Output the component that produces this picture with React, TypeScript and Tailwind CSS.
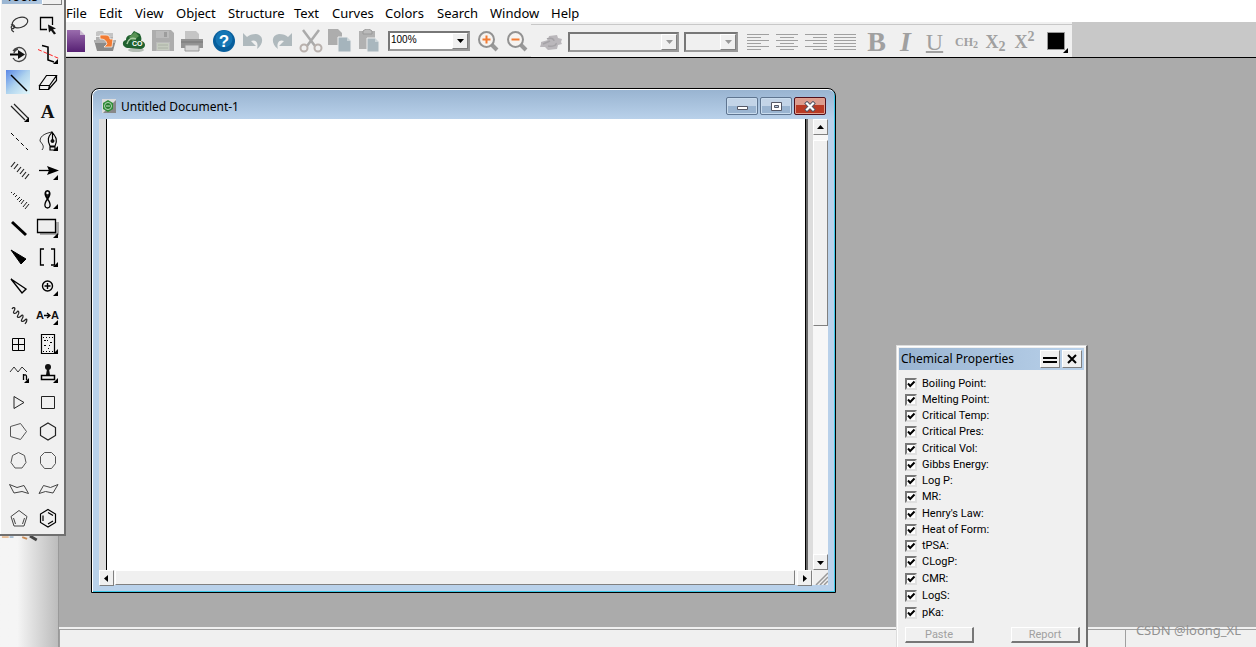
import { useState } from "react";
import type { ReactNode } from "react";
import clsx from "clsx";

const menus = [
  { label: "File", width: "w-[33px]" },
  { label: "Edit", width: "w-9" },
  { label: "View", width: "w-[41px]" },
  { label: "Object", width: "w-[52px]" },
  { label: "Structure", width: "w-[66px]" },
  { label: "Text", width: "w-[38px]" },
  { label: "Curves", width: "w-[53px]" },
  { label: "Colors", width: "w-[52px]" },
  { label: "Search", width: "w-[53px]" },
  { label: "Window", width: "w-[61px]" },
  { label: "Help", width: "w-10" },
];

const propertyGroups = [
  ["Boiling Point:", "Melting Point:", "Critical Temp:", "Critical Pres:"],
  ["Critical Vol:", "Gibbs Energy:", "Log P:", "MR:"],
  ["Henry's Law:", "Heat of Form:", "tPSA:", "CLogP:"],
  ["CMR:"],
  ["LogS:"],
  ["pKa:"],
];

const raised =
  "border border-t-white border-l-white border-r-[#808080] border-b-[#808080] bg-[#f0f0f0]";

const more = <path d="M24 19v5h-5z" fill="#000" stroke="none" />;

type Tool = { name: string; icon: ReactNode };

const tools: Tool[] = [
  {
    name: "Lasso",
    icon: (
      <g strokeWidth="1.2" stroke="#333">
        <ellipse cx="15" cy="11.5" rx="8" ry="5" transform="rotate(-18 15 11.5)" />
        <path d="M6 14c2-1 5 1 3 3s-4-1-2-2M7 17c-1 2 0 3 2 4" />
      </g>
    ),
  },
  {
    name: "Marquee",
    icon: (
      <g>
        <path d="M13 18.500H6.500V6.500H18.500V14" strokeWidth="1.300" />
        <path d="M14 13.500l8 4-3 1 3 4-2 1-3-4-2 2z" fill="#111" stroke="none" />
      </g>
    ),
  },
  {
    name: "Structure Perspective",
    icon: (
      <g strokeWidth="1.3">
        <path d="M8 11a7 7 0 1 1 0 7M9 13a5 5 0 0 1 4-4" stroke="#444" />
        <path d="M5 14.500h10" strokeWidth="2" />
        <path d="M13 10l7 4.500-7 4.500z" fill="#111" stroke="none" />
      </g>
    ),
  },
  {
    name: "Mass Fragmentation",
    icon: (
      <g>
        <path d="M8 5.500l6 1.500v13l6 2" strokeWidth="1.600" />
        <path d="M4 9.500l21 9" stroke="#f22" strokeDasharray="4 2" />
        {more}
      </g>
    ),
  },
  { name: "Solid Bond", icon: <path d="M6 6l16 16" strokeWidth="1.500" /> },
  {
    name: "Eraser",
    icon: (
      <path d="M5.500 16.500l7-10h10l-7 10zM5.500 16.500v4h9l1-4M14.500 20.500l8-9v-5" strokeWidth="1.200" />
    ),
  },
  {
    name: "Multiple Bonds",
    icon: (
      <g strokeWidth="1.200" stroke="#222">
        <path d="M6 8l14 14M9 6l14 14" />
        {more}
      </g>
    ),
  },
  {
    name: "Text",
    icon: (
      <text x="13.500" y="20" textAnchor="middle" className="font-['Liberation_Serif'] text-[19px] font-bold" fill="#111" stroke="none">
        A
      </text>
    ),
  },
  { name: "Dashed Bond", icon: <path d="M6 6l17 17" strokeDasharray="4 3" /> },
  {
    name: "Pen",
    icon: (
      <g>
        <path d="M8 23c3-4 0-6-2-9 0-6 7-8 12-9" stroke="#333" />
        <path d="M18 5c-4 5-5 8-2 14h5c3-6 1-9-3-14zM18.500 6v8M16 20h5v3h-5z" strokeWidth="1.200" />
        <circle cx="18.500" cy="14" r="1.500" fill="#111" />
        {more}
      </g>
    ),
  },
  {
    name: "Hashed Bond",
    icon: (
      <path d="M6 11l4-5M9 13l4-5M12 16l4-5M15 18l4-5M17 21l4-5M20 23l4-5" strokeWidth="1.200" stroke="#222" />
    ),
  },
  {
    name: "Arrow",
    icon: (
      <g>
        <path d="M5 14.500h11" strokeWidth="1.300" />
        <path d="M13 10l12 4.500-12 4.500 2-4.500z" fill="#000" stroke="none" />
        {more}
      </g>
    ),
  },
  {
    name: "Hashed Wedged Bond",
    icon: (
      <path d="M6 8l1-1M8 10l2-2M10 12l2-2M12 15l3-3M14 17l3-3M16 19l3-4M18 22l4-5M20 24l4-5" stroke="#222" />
    ),
  },
  {
    name: "Orbital",
    icon: (
      <g>
        <path d="M13.500 14c-8-11 8-11 0 0z" fill="#222" strokeWidth="1.500" />
        <circle cx="13.500" cy="8" r="1.200" fill="#fff" stroke="none" />
        <path d="M13.500 14c-9 12 9 12 0 0z" strokeWidth="1.300" />
        {more}
      </g>
    ),
  },
  { name: "Bold Bond", icon: <path d="M7 8l14 13" strokeWidth="3" /> },
  {
    name: "Drawing Elements",
    icon: (
      <g>
        <path d="M6 8h19v13H6z" fill="#aaa" stroke="none" />
        <path d="M3.500 5.500h18v13h-18z" fill="#eee" strokeWidth="1.300" />
        {more}
      </g>
    ),
  },
  { name: "Wedged Bond", icon: <path d="M6 7l15 9-5 5z" fill="#000" /> },
  {
    name: "Bracket",
    icon: (
      <g strokeWidth="1.300">
        <path d="M10 6H6.500v16H10M17 6h3.500v16H17" />
        {more}
      </g>
    ),
  },
  { name: "Hollow Wedged Bond", icon: <path d="M6 7l15 10-4 4z" strokeWidth="1.400" /> },
  {
    name: "Chemical Symbols",
    icon: (
      <g strokeWidth="1.400">
        <circle cx="13.500" cy="14" r="5" />
        <path d="M10.500 14h6M13.500 11v6" />
        {more}
      </g>
    ),
  },
  {
    name: "Wavy Bond",
    icon: (
      <path d="M7 8c2-3 4-1 2 2s2 3 3 1 3 0 1 3 1 3 3 1 3 0 1 3 1 3 3 1 3 0 0 4" strokeWidth="1.200" stroke="#222" />
    ),
  },
  {
    name: "Atom Map",
    icon: (
      <g>
        <text x="2" y="18" className="font-['Liberation_Sans'] text-[11px] font-bold" fill="#111" stroke="none">
          A
        </text>
        <text x="17" y="18" className="font-['Liberation_Sans'] text-[11px] font-bold" fill="#111" stroke="none">
          A
        </text>
        <path d="M10 14.500h6M13 12l3 2.500-3 2.500" strokeWidth="1.300" />
        {more}
      </g>
    ),
  },
  { name: "Table", icon: <path d="M7.500 8.500h12v12h-12zM13.500 8.500v12M7.500 14.500h12" /> },
  {
    name: "TLC Plate",
    icon: (
      <g>
        <path d="M7.500 4.500h13v19h-13z" strokeWidth="1.200" />
        <path d="M9 7.500h10M9 21.500h10" strokeDasharray="1 2" />
        <path d="M10 10.500h2M16 12.500h2M10 15.500h2M13 10.500h1M15 15.500h1M14 18.500h1" />
        {more}
      </g>
    ),
  },
  {
    name: "Acyclic Chain",
    icon: (
      <g>
        <path d="M5 13l4-5 4 5 4-5 5 5" stroke="#333" />
        <path d="M18.500 21v-6M18.500 16.500c1-1 3-1 3 1V21" strokeWidth="1.300" />
        {more}
      </g>
    ),
  },
  {
    name: "Template",
    icon: (
      <g>
        <circle cx="14" cy="8" r="3" fill="#111" stroke="none" />
        <path d="M13 10h2l1 6h-4z" fill="#111" stroke="none" />
        <path d="M7.500 16.500h13v4h-13z" strokeWidth="1.500" />
        {more}
      </g>
    ),
  },
  { name: "Cyclopropane Ring", icon: <path d="M9 8.500v12l10-6z" stroke="#222" /> },
  { name: "Cyclobutane Ring", icon: <path d="M7.500 8.500h13v12h-13z" stroke="#222" /> },
  { name: "Cyclopentane Ring", icon: <path d="M5.500 9.500l10-3 6 8-6 8-10-3z" stroke="#555" /> },
  { name: "Cyclohexane Ring", icon: <path d="M14 6l7.500 4.500v8L14 23l-7.500-4.500v-8z" stroke="#222" strokeWidth="1.200" /> },
  {
    name: "Cycloheptane Ring",
    icon: <path d="M13.500 6.500l6 3 1.500 7-4 5.500h-7l-4-5.500 1.500-7z" stroke="#555" />,
  },
  {
    name: "Cyclooctane Ring",
    icon: <path d="M10.500 6.500h7l4 4v7l-4 5h-7l-4-5v-7z" stroke="#555" />,
  },
  {
    name: "Cyclohexane Chair",
    icon: <path d="M4.500 9.500l7.500 3 7-2 4.500 8-6.500-2-8 1.500z" stroke="#444" />,
  },
  {
    name: "Alternate Chair",
    icon: <path d="M24 9.500l-7.500 3-7-2-4.500 8 6.500-2 7.500 1.500z" stroke="#444" />,
  },
  {
    name: "Cyclopentadiene Ring",
    icon: <path d="M14 6.500l8 6-3 9.500H9L6 12.500zM8.500 14l2 6M19.500 14l-2 6" stroke="#444" />,
  },
  {
    name: "Benzene Ring",
    icon: (
      <path
        d="M14 5.500l7.500 4.500v8.500L14 23l-7.500-4.500V10zM9 11.500v5.500M14 8.500l5 3M19 17l-5 3"
        strokeWidth="1.200"
      />
    ),
  },
];

function ToolButton({ label, children }: { label: string; children: ReactNode }) {
  return (
    <button
      type="button"
      aria-label={label}
      className="flex h-[29px] w-[29px] shrink-0 items-center justify-center text-[#a0a0a0]"
    >
      {children}
    </button>
  );
}

function Icon({ children }: { children: ReactNode }) {
  return (
    <svg className="h-6 w-6" viewBox="0 0 24 24" fill="none">
      {children}
    </svg>
  );
}

function MenuBar() {
  return (
    <nav className="flex h-[22px] shrink-0 bg-white pl-[66px] pt-1 text-[13px] leading-[18px]">
      {menus.map((menu) => (
        <button key={menu.label} type="button" className={clsx("shrink-0 text-left", menu.width)}>
          {menu.label}
        </button>
      ))}
    </nav>
  );
}

function Combo({ label, className, options, disabled }: { label: string; className: string; options: string[]; disabled?: boolean }) {
  return (
    <label
      className={clsx(
        "flex h-5 shrink-0 border-2 border-t-[#777] border-l-[#777] border-r-[#999] border-b-[#999]",
        disabled ? "bg-[#f0f0f0]" : "bg-white",
        className
      )}
    >
      <select
        aria-label={label}
        disabled={disabled}
        className="min-w-0 flex-1 appearance-none pb-0.5 pl-px font-['Liberation_Sans',sans-serif] text-[10px] leading-3 outline-none"
      >
        {options.map((option) => (
          <option key={option}>{option}</option>
        ))}
      </select>
      <span className={clsx("flex w-4 items-center justify-center", raised)}>
        <svg className="h-1 w-[7px]" viewBox="0 0 7 4">
          <path d="M0 0h7L3.500 4z" fill={disabled ? "#999" : "#000"} />
        </svg>
      </span>
    </label>
  );
}

function AlignIcon({ rows }: { rows: number[][] }) {
  return (
    <svg className="h-[18px] w-[22px]" viewBox="0 0 22 18" stroke="#a0a0a0">
      {rows.map(([start, end], i) => (
        <path key={i} d={`M${start} ${i * 3 + 1.5}H${end}`} />
      ))}
    </svg>
  );
}

function Toolbar() {
  return (
    <div className="flex h-9 shrink-0 border-b border-black bg-[#c8c8c8]">
      <div className="flex h-[35px] items-center border-b border-[#d0d0d0] bg-[#f0f0f0] pl-[61px] pt-[3px]">
        <ToolButton label="New">
          <Icon>
            <defs>
              <linearGradient id="purple" x2="0" y2="1">
                <stop stopColor="#9a6cad" />
                <stop offset="1" stopColor="#562073" />
              </linearGradient>
            </defs>
            <path d="M3 1h13v5h5v17H3z" fill="url(#purple)" />
            <path d="M16 1l5 5h-5z" fill="#c9b8d0" />
          </Icon>
        </ToolButton>
        <ToolButton label="Open">
          <Icon>
            <path d="M3 7V3l2-1h5l1 2h9v4z" fill="#c4c4c4" />
            <path d="M1 11h22l-3 11H4z" fill="#8a8a8a" />
            <path d="M3 8h17v3h3l-1 3H2l-1-3h2z" fill="#b0b0b0" />
            <path d="M7 6h6c3 0 4 2 4 4h3l-1 8h-8l3-3c-1-4-3-5-7-5z" fill="#f27b32" stroke="#fff" strokeWidth=".7" />
          </Icon>
        </ToolButton>
        <ToolButton label="ChemOffice Cloud">
          <Icon>
            <ellipse cx="14" cy="21" rx="8" ry="2" fill="#b5bdb5" />
            <path d="M7 19c-7 0-8-7-3-8 0-4 3-5 5-5l3-4 6 3c1 3 2 4 1 7 6 1 5 8-1 8z" fill="#20612f" />
            <path d="M7 8l6-5 4 4-6 5z" fill="#599355" />
            <path d="M5 15c1-5 5-7 9-5" stroke="#a9cda4" strokeWidth="1.5" />
            <text x="10" y="17" className="font-['Liberation_Sans'] text-[7px] font-bold" fill="#fff">
              CO
            </text>
          </Icon>
        </ToolButton>
        <ToolButton label="Save">
          <Icon>
            <path d="M1 1h19l3 3v18H1z" fill="#adadad" />
            <path d="M5 2h13v7H5zM5 13h14v9H5z" fill="#bbb" />
            <path d="M13 3h3v5h-3z" fill="#9d9d9d" />
            <path d="M6 14h12v7H6z" fill="#c5cbbf" />
            <path d="M7 16h10M7 19h10" stroke="#aab0a5" />
          </Icon>
        </ToolButton>
        <ToolButton label="Print">
          <Icon>
            <path d="M5 2h11l3 3v6H5z" fill="#c5c5c5" />
            <path d="M1 10h22v9H1z" fill="#929292" />
            <path d="M1 13h22" stroke="#777" />
            <path d="M5 16h14v6H5z" fill="#d4d4d4" stroke="#999" />
          </Icon>
        </ToolButton>
        <div className="ml-[3px] flex">
          <ToolButton label="Help">
            <Icon>
              <circle cx="12" cy="12" r="11" fill="#075e9c" />
              <circle cx="12" cy="10" r="8.500" fill="#1475b4" />
              <text x="12" y="18" textAnchor="middle" className="font-['Liberation_Sans'] text-[17px] font-bold" fill="#fff">
                ?
              </text>
            </Icon>
          </ToolButton>
          <ToolButton label="Undo">
            <Icon>
              <path d="M2 4v13h13l-5-5c4-2 8 1 6 8 7-5 7-14-1-15-4 0-7 1-9 3z" fill="#afb9bd" />
            </Icon>
          </ToolButton>
          <ToolButton label="Redo">
            <Icon>
              <path d="M22 4v13H9l5-5c-4-2-8 1-6 8C1 15 1 6 9 5c4 0 7 1 9 3z" fill="#afb9bd" />
            </Icon>
          </ToolButton>
          <ToolButton label="Cut">
            <Icon>
              <path d="M4 1l12 16M20 1L8 17" stroke="#aaa" strokeWidth="2.500" />
              <circle cx="5" cy="19" r="3.500" stroke="#b9b1ad" strokeWidth="2" />
              <circle cx="19" cy="19" r="3.500" stroke="#b9b1ad" strokeWidth="2" />
            </Icon>
          </ToolButton>
          <ToolButton label="Copy">
            <Icon>
              <path d="M0 0h10l4 4v12H0z" fill="#adadad" />
              <path d="M10 8h9l4 4v11H10z" fill="#a5b4bc" stroke="#eee" />
              <path d="M19 8l4 4h-4z" fill="#ccd5d9" />
            </Icon>
          </ToolButton>
          <ToolButton label="Paste">
            <Icon>
              <path d="M2 2h16v18H2z" fill="#b1b1b1" />
              <path d="M6 5V2l3-2h3l3 2v3z" fill="#bbb" stroke="#999" />
              <path d="M10 9h8l4 4v10H10z" fill="#a9b7be" stroke="#eee" />
              <path d="M18 9l4 4h-4z" fill="#ccd5d9" />
            </Icon>
          </ToolButton>
        </div>
        <Combo label="Zoom" className="ml-[5px] w-[82px]" options={["100%", "200%", "400%"]} />
        <div className="ml-[3px] flex">
          <ToolButton label="Zoom In">
            <Icon>
              <path d="M15 15l6 6" stroke="#999" strokeWidth="4" />
              <circle cx="10.500" cy="10.500" r="7.500" fill="#f6f3f0" stroke="#929292" strokeWidth="2" />
              <path d="M6.500 10.500h8M10.500 6.500v8" stroke="#f27b32" strokeWidth="2" />
            </Icon>
          </ToolButton>
          <ToolButton label="Zoom Out">
            <Icon>
              <path d="M15 15l6 6" stroke="#999" strokeWidth="4" />
              <circle cx="10.500" cy="10.500" r="7.500" fill="#f6f3f0" stroke="#929292" strokeWidth="2" />
              <path d="M6.500 10.500h8" stroke="#f27b32" strokeWidth="2" />
            </Icon>
          </ToolButton>
        </div>
      </div>
      <div className="flex items-center bg-[#f0f0f0] pl-[5px] pr-px pt-1 shadow-[inset_0_2px_#f0f0f0,inset_0_3px_#c8c8c8]">
        <ToolButton label="Clean Up Structure">
          <Icon>
            <path d="M2 12l7-2 1-4 8-1 1 3 4 1-1 3 1 2-4 1-1 4-9 1-3-3-5 0 1-3z" fill="#bab7bb" />
            <path d="M8 9c4-2 7 0 7 2M4 14l7-3M9 16c5 1 9-1 8-3" stroke="#a5a3a7" strokeWidth="1.500" />
          </Icon>
        </ToolButton>
        <Combo label="Font" className="ml-[3px] w-[111px]" options={[""]} disabled />
        <Combo label="Font size" className="ml-[5px] w-[54px]" options={[""]} disabled />
        <div className="ml-[5px] flex">
          <ToolButton label="Align Left">
            <AlignIcon rows={[[0, 22], [0, 14], [0, 22], [0, 14], [0, 22], [0, 14]]} />
          </ToolButton>
          <ToolButton label="Center">
            <AlignIcon rows={[[0, 22], [4, 18], [0, 22], [4, 18], [0, 22], [4, 18]]} />
          </ToolButton>
          <ToolButton label="Align Right">
            <AlignIcon rows={[[0, 22], [8, 22], [0, 22], [8, 22], [0, 22], [8, 22]]} />
          </ToolButton>
          <ToolButton label="Justify">
            <AlignIcon rows={[[0, 22], [0, 22], [0, 22], [0, 22], [0, 22], [0, 22]]} />
          </ToolButton>
        </div>
        <div className="ml-[3px] flex font-['Liberation_Serif',serif] font-bold">
          <ToolButton label="Bold">
            <span className="text-[28px] leading-6">B</span>
          </ToolButton>
          <ToolButton label="Italic">
            <span className="text-[28px] italic leading-6">I</span>
          </ToolButton>
          <ToolButton label="Underline">
            <span className="text-[24px] font-normal leading-6 underline decoration-2">U</span>
          </ToolButton>
        </div>
        <div className="ml-[3px] flex font-['Liberation_Serif',serif] font-bold">
          <ToolButton label="Formula">
            <span className="text-[12px] leading-4">
              CH<sub className="text-[10px]">2</sub>
            </span>
          </ToolButton>
          <ToolButton label="Subscript">
            <span className="text-[18px] leading-5">
              X<sub className="text-[14px]">2</sub>
            </span>
          </ToolButton>
          <ToolButton label="Superscript">
            <span className="text-[18px] leading-5">
              X<sup className="text-[14px]">2</sup>
            </span>
          </ToolButton>
        </div>
        <div className="ml-[3px] flex">
          <ToolButton label="Color">
            <Icon>
              <path d="M2.500 2.500h17v17h-17z" fill="#000" stroke="#999" />
              <path d="M23 18v5h-5z" fill="#000" />
            </Icon>
          </ToolButton>
        </div>
      </div>
    </div>
  );
}

function ToolPalette() {
  const [active, setActive] = useState("Solid Bond");

  return (
    <aside className="absolute -top-4 left-0 w-[66px] border-r-2 border-b-2 border-[#707070] bg-[#f0f0f0] pb-px shadow-[inset_1px_0_#fff]">
      <div className="ml-0.5 mr-0.5 flex h-5 justify-between bg-linear-to-r from-[#99b4d1] to-[#b9d1ea] pl-1">
        <h2 className="text-[13px] leading-6">Tools</h2>
        <button type="button" aria-label="Close tools" className={clsx("h-[21px] w-5", raised)} />
      </div>
      <div className="mt-[7px] grid grid-cols-[29px_29px] pl-[5px]">
        {tools.map((tool) => (
          <button
            key={tool.name}
            type="button"
            aria-label={tool.name}
            aria-pressed={active === tool.name}
            onClick={() => setActive(tool.name)}
            className="flex h-[29px] w-[29px] items-start p-px"
          >
            <span
              className={clsx(
                "block h-6 w-6 shrink-0 overflow-visible",
                active === tool.name && "bg-linear-to-br from-[#5b86e5] via-[#b0d4ee] to-[#e4f7fa]"
              )}
            >
              <svg className="h-[29px] w-[29px] max-w-none" viewBox="1 1 29 29" fill="none" stroke="#000">
                {tool.icon}
              </svg>
            </span>
          </button>
        ))}
      </div>
    </aside>
  );
}

function ScrollButton({ label, d }: { label: string; d: string }) {
  return (
    <button type="button" aria-label={label} className={clsx("flex h-4 w-[15px] shrink-0 items-center justify-center", raised)}>
      <svg className="h-[7px] w-[7px]" viewBox="0 0 7 7">
        <path d={d} />
      </svg>
    </button>
  );
}

const captionButton =
  "flex h-[18px] w-8 items-center justify-center rounded-xs border border-[#5f7590] bg-linear-to-b from-[#c3d4e7] from-50% to-[#9ab4d0] to-50% shadow-[inset_0_0_0_1px_#c9dcee]";

function DocumentWindow() {
  return (
    <section className="absolute left-[91px] top-[88px] flex h-[505px] w-[745px] flex-col rounded-t-lg border border-black bg-[#b9d1ea] px-[7px] pb-[7px] shadow-[inset_1px_1px_#fff,inset_-1px_-1px_#3cc8e8]">
      <header className="-mx-1.5 mt-px flex h-[29px] shrink-0 items-center rounded-t-md bg-linear-to-b from-[#99b4d1] to-[#b9d1ea] pl-2 pr-2 pt-2">
        <svg className="mb-1.5 h-4 w-4" viewBox="0 0 16 16">
          <path d="M1 1h14v14H1z" fill="#ddd" />
          <path d="M15 2v13H2z" fill="#888" />
          <path d="M7 2l5 3v6l-5 3-5-3V5z" fill="#2f8d36" />
          <circle cx="7" cy="8" r="3.500" fill="#257b2b" stroke="#b5dab7" />
          <path d="M5 8h4" stroke="#c6e4c8" />
        </svg>
        <h1 className="mb-1 ml-1 flex-1 text-[12px] leading-[18px]">Untitled Document-1</h1>
        <div className="mb-[5px] flex gap-0.5">
          <button type="button" aria-label="Minimize" className={captionButton}>
            <svg className="h-[11px] w-[11px]" viewBox="0 0 11 11">
              <path d="M.5 5.500h10v3H.5z" fill="#fff" stroke="#545765" />
            </svg>
          </button>
          <button type="button" aria-label="Maximize" className={captionButton}>
            <svg className="h-[11px] w-[11px]" viewBox="0 0 11 11">
              <path d="M.5 1.500h10v8H.5z" fill="#fff" stroke="#545765" />
              <path d="M3.500 4.500h4v2h-4z" fill="#b4c8dd" stroke="#545765" />
            </svg>
          </button>
          <button
            type="button"
            aria-label="Close"
            className="flex h-[18px] w-8 items-center justify-center rounded-xs border border-[#50101c] bg-linear-to-b from-[#dc9c8e] from-45% to-[#b93a24] to-45% shadow-[inset_0_0_0_1px_#e0a090]"
          >
            <svg className="h-[11px] w-[12px]" viewBox="0 0 12 11">
              <path d="M3 2.500l6 6M9 2.500l-6 6" stroke="#545765" strokeWidth="4" strokeLinecap="square" />
              <path d="M3 2.500l6 6M9 2.500l-6 6" stroke="#fff" strokeWidth="2.200" strokeLinecap="square" />
            </svg>
          </button>
        </div>
      </header>
      <div className="flex min-h-0 flex-1 bg-[#ddd]">
        <div className="ml-[7px] mr-[5px] flex flex-1 border-r-2 border-[#666]">
          <div className="flex-1 border-x border-black bg-white" />
        </div>
        <div className="flex w-[15px] flex-col bg-[#f7f7f7]">
          <ScrollButton label="Scroll up" d="M0 5h7L3.500 1z" />
          <div className={clsx("mt-[5px] h-[186px]", raised)} />
          <div className="flex-1" />
          <ScrollButton label="Scroll down" d="M0 2h7L3.500 6z" />
        </div>
      </div>
      <div className="flex h-[15px] shrink-0 bg-[#f7f7f7]">
        <ScrollButton label="Scroll left" d="M5 0v7L1 3.500z" />
        <div className={clsx("ml-px mr-0.5 flex-1", raised)} />
        <ScrollButton label="Scroll right" d="M2 0v7l4-3.500z" />
        <svg className="ml-px h-[15px] w-[15px]" viewBox="0 0 15 15" stroke="#999" strokeWidth="1.500">
          <path d="M0 0h15v15H0z" fill="#f0f0f0" stroke="none" />
          <path d="M3 15L15 3M7 15l8-8M11 15l4-4" />
        </svg>
      </div>
    </section>
  );
}

function PropertyCheckbox({ label }: { label: string }) {
  return (
    <label className="flex h-4 items-center text-[11px] leading-4">
      <span className="relative mr-[5px] h-3 w-3">
        <input
          type="checkbox"
          defaultChecked
          className="peer block h-3 w-3 appearance-none border-2 border-t-[#777] border-l-[#777] border-r-[#e0e0e0] border-b-[#e0e0e0] bg-white"
        />
        <svg
          className="pointer-events-none absolute inset-0 hidden h-3 w-3 peer-checked:block"
          viewBox="0 0 12 12"
          fill="none"
        >
          <path d="M3 5.500l2.200 2.500L9.500 3.500" stroke="#000" strokeWidth="2" />
        </svg>
      </span>
      {label}
    </label>
  );
}

function ChemicalProperties() {
  const footerButton =
    "h-4 w-[69px] border-r-2 border-b-2 border-t border-l border-t-white border-l-white border-r-[#777] border-b-[#777] text-[11px] leading-3 text-[#a0a0a0]";

  return (
    <aside className="absolute bottom-0 left-[896px] top-[345px] w-[192px] overflow-hidden border-l border-t border-r-2 border-l-[#ddd] border-t-[#ddd] border-r-[#707070] bg-[#f0f0f0] px-0.5 pt-0.5 shadow-[inset_1px_1px_#fff]">
      <header className="flex h-[22px] items-center gap-0.5 bg-linear-to-r from-[#99b4d1] to-[#b9d1ea] pl-0.5 pr-0.5">
        <h2 className="flex-1 text-[12px] leading-[18px]">Chemical Properties</h2>
        <button type="button" aria-label="Collapse" className={clsx("flex h-[18px] w-5 items-center justify-center", raised)}>
          <svg className="h-3 w-[14px]" viewBox="0 0 14 12">
            <path d="M0 5h14M0 9h14" stroke="#000" strokeWidth="2" />
          </svg>
        </button>
        <button type="button" aria-label="Close properties" className={clsx("flex h-[18px] w-5 items-center justify-center", raised)}>
          <svg className="h-3 w-3" viewBox="0 0 12 12">
            <path d="M2 2l8 8M10 2l-8 8" stroke="#000" strokeWidth="2" />
          </svg>
        </button>
      </header>
      <div className="mt-1.5 flex flex-col gap-px pl-1.5 font-['Roboto',sans-serif]">
        {propertyGroups.map((group) => (
          <div key={group[0]}>
            {group.map((label) => (
              <PropertyCheckbox key={label} label={label} />
            ))}
          </div>
        ))}
      </div>
      <footer className="mt-1.5 flex justify-between pl-1.5 pr-1 font-['Roboto',sans-serif]">
        <button type="button" disabled className={footerButton}>
          Paste
        </button>
        <button type="button" disabled className={footerButton}>
          Report
        </button>
      </footer>
    </aside>
  );
}

function App() {
  return (
    <div className="relative flex h-screen flex-col overflow-hidden bg-[#ababab] font-['Noto_Sans',sans-serif] text-black">
      <MenuBar />
      <Toolbar />
      <div className="flex min-h-0 flex-1">
        <div className="flex w-[59px] shrink-0 flex-col justify-end border-r border-[#999] bg-linear-to-r from-[#f5f5f5] from-30% to-[#bcbcbc]">
          <svg className="mb-[105px] h-2 w-full" viewBox="0 0 60 8">
            <path d="M2 3h7" stroke="#d98a43" />
            <path d="M10 3h4" stroke="#668eb5" />
            <path d="M23 3l5 2" stroke="#c98b55" strokeWidth="2" />
            <path d="M31 2l7 4" stroke="#444" strokeWidth="3" />
          </svg>
        </div>
        <main className="flex min-w-0 flex-1 flex-col justify-end">
          <footer className="flex h-5 border-t-2 border-[#f0f0f0] bg-[#f0f0f0]">
            <div className="flex-1 border-l border-t border-[#a0a0a0]" />
            <div className="w-[131px] border-l border-t border-[#a0a0a0]" />
          </footer>
        </main>
      </div>
      <p className="absolute bottom-2 right-[15px] text-[13px] leading-[18px] text-[#929292]">CSDN @loong_XL</p>
      <DocumentWindow />
      <ToolPalette />
      <ChemicalProperties />
    </div>
  );
}

export default App;
